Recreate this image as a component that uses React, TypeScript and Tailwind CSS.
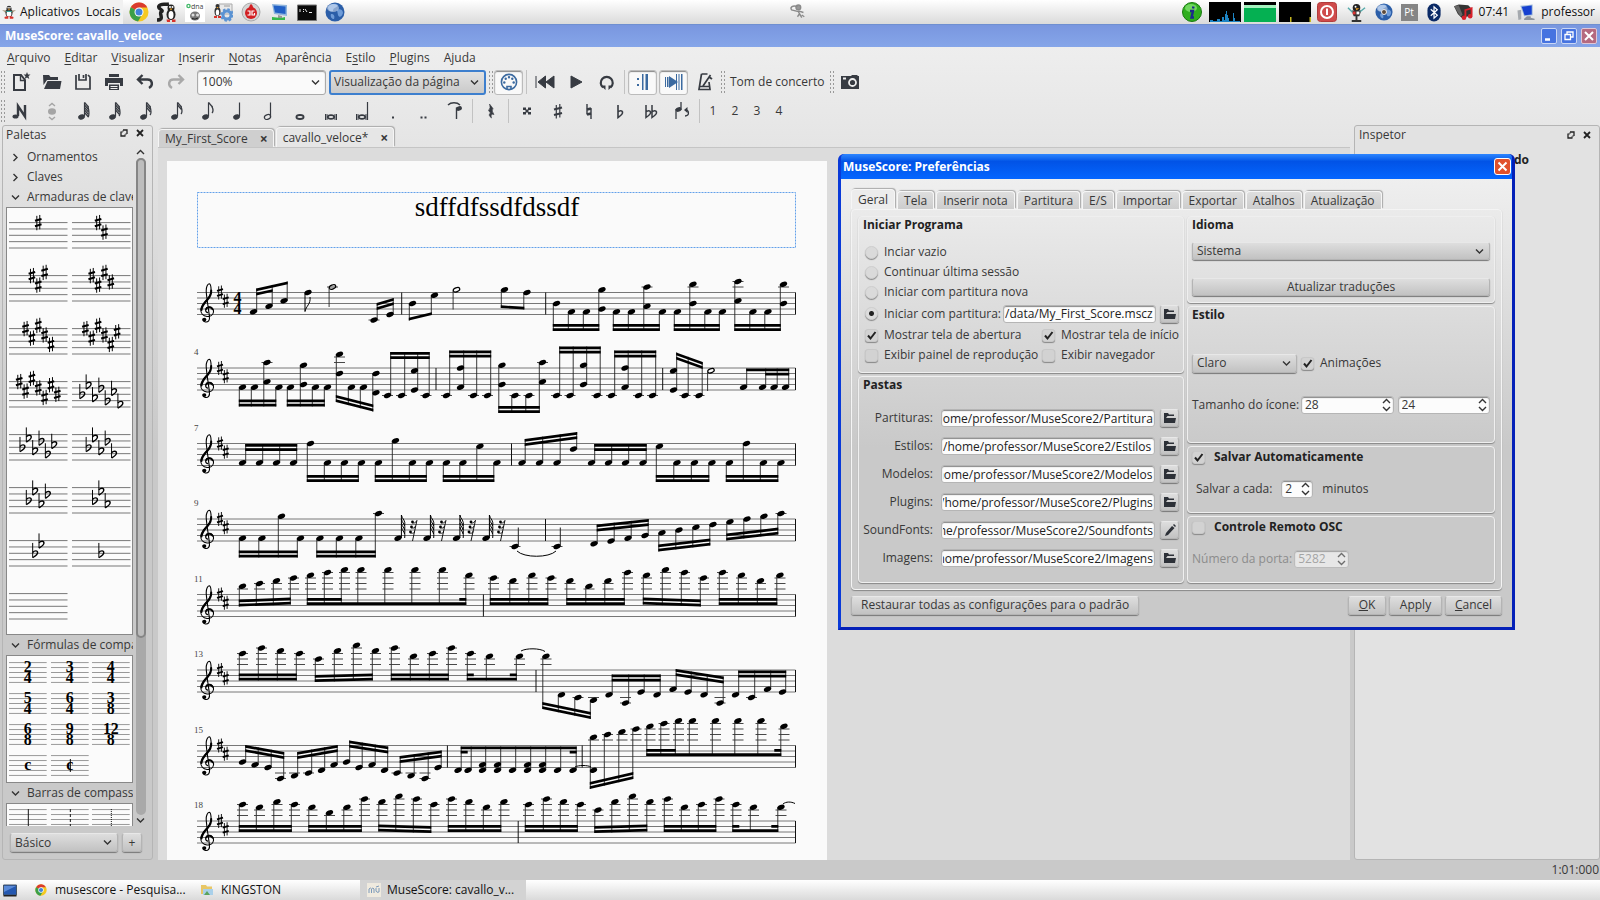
import { useEffect, useRef, type ReactNode } from "react";

const STEP = 2.75;
const SPACE = 5.5;
const STAFF_LEFT = 197;
const STAFF_RIGHT = 795.5;

type System = {
  label?: string;
  bars: number[];
  // direction, beam start, beam end, optional short beams, then x:pitch[,pitch]
  beams: string[];
};

const systems: System[] = [
  {
    bars: [401.7, 545.7],
    beams: [
      "u -4 -11 sec0-1 253.5:7 269:5 284:3",
      "u 10.5 5.5 374:10 390:8",
      "d 28 22.5 one 412.5:4 434.5:1",
      "d 15.5 17 one 504.5:-1 527:0",
      "d 38.5 38.5 556.5:4 571.5:7 586.5:7 602:-1,6",
      "d 38.5 38.5 616.5:7 631.5:7 647:-2,5 662.5:7",
      "d 38.5 38.5 677.5:7 693:-3,4 708:7 722.5:7",
      "d 38.5 38.5 738:-4,3 753:7 768:7 783.5:-3,4",
    ],
  },
  {
    label: "4",
    bars: [436, 662.7],
    beams: [
      "d 38.5 38.5 242.5:7 254.5:7 267:-2,5 279:7",
      "d 38.5 38.5 290.5:7 303.5:-1,6 315.5:7 327.5:7",
      "d 34 43.5 339.5:-5,2 351.5:7 363.5:7 376:2,9",
      "u -16 -16 387.5:10 401.5:10 414.5:1,8 426:10",
      "u -17.5 -17.5 446.5:10 460.5:0,7 473.5:10 487.5:10",
      "d 45 45 502:-1,6 515:10 529:10 542.5:-2,5",
      "u -21.5 -21.5 556.5:10 570:10 583.5:-1,6 597:10",
      "u -17.5 -17.5 611.5:10 625:0,7 638.5:10 652.5:10",
      "u -15.5 -6 673.5:1,8 685:10 699:10",
      "u 0.5 0.5 sec1-3 743.5:7 762.5:7 774:7 785.5:7",
    ],
  },
  {
    label: "7",
    bars: [511.5],
    beams: [
      "u 0.5 0.5 242.5:7 259.5:7 276.5:7 293.5:7",
      "d 38.5 38.5 310.5:0 327.5:7 344.5:7 361.5:7",
      "d 38.5 38.5 378.5:7 395.5:-1 412.5:7 429.5:7",
      "d 38.5 38.5 446.5:7 463:7 480:1 497:7",
      "u -4.5 -11.5 522:7 539.5:7 557:7 573.5:2",
      "u 0.5 0.5 591.5:7 608.5:7 625.5:7 643:7",
      "d 38.5 38.5 659.5:1 677:7 694.5:7 712:7",
      "d 38.5 38.5 729.5:7 746.5:0 763.5:7 781:7",
    ],
  },
  {
    label: "9",
    bars: [545.5],
    beams: [
      "d 38.5 38.5 242.5:7 262:7 281.5:-1 300.5:7",
      "d 38.5 38.5 320:7 339.5:7 359:7 378.5:-2",
      "u 5.5 0 594:9 611:8 628:7 645:6",
      "d 32.5 26.5 662:5 679:4 696:3 713:2",
      "d 21.5 15.5 730:1 747:0 764:-1 781:-2",
    ],
  },
  {
    label: "11",
    bars: [483.4],
    beams: [
      "d 12 10 242.5:-3 259.5:-4 276.5:-5 293.5:-6",
      "d 10.5 10.5 sec0-2 end 310.5:-7 327.5:-8 344.5:-9 361:-9 388:-9 415:-9 442.5:-9 469:-7",
      "d 10.5 10.5 493.5:-6 513:-5 532:-7 551:-6",
      "d 10.5 10.5 570:-5 589:-3 608:-5 627.5:-8",
      "d 10 12 646.5:-7 665.5:-9 684.5:-8 703.5:-6",
      "d 10.5 10.5 722.5:-8 741.5:-7 760.5:-5 780:-7",
    ],
  },
  {
    label: "13",
    bars: [536],
    beams: [
      "d 10.5 10.5 242.5:-6 261.5:-8 280.5:-7 299.5:-6",
      "d 12 10.5 318.5:-4 337.5:-7 356.5:-9 375.5:-7",
      "d 10.5 10.5 394.5:-8 413.5:-5 432.5:-6 451.5:-8",
      "d 10.5 10.5 one start end 470.5:-6 489.5:-5 519.5:-5",
      "d 39 49 546:-5 561.5:9 578:10 593.5:11",
      "u 4.5 4.5 609:9 625.5:12 641:8 657:9",
      "u -1 6.5 673:7 688:8 704:9 720:12",
      "u 0.5 0.5 735.5:9 751.5:10 767.5:7 782.5:8",
    ],
  },
  {
    label: "15",
    bars: [447.4, 582.2],
    beams: [
      "u -0.5 6.5 242.5:6 255:7 268:8 280.5:12",
      "u 6.5 -0.5 294.5:11 308.5:10 321.5:9 334:7",
      "u -5 1 346.5:6 359:8 372:7 384.5:9",
      "u 10.5 5 397:10 411:11 425:12 438:8",
      "u 1 1 one start end 458:9 468:9 482.5:7,9 497.5:7,9 512.5:9 527.5:7,9 542.5:7,9 557.5:9 573:9",
      "d 43.5 33.5 593.5:-3,9 607.5:-4 622:-5 636:-6",
      "d 10.5 10.5 sec0-2 end 650:-7 664:-8 678.5:-9 692.5:-9 715.5:-9 738:-9 761:-9 784:-7",
    ],
  },
  {
    label: "18",
    bars: [518.2],
    beams: [
      "d 11 11 242.5:-6 259.5:-5 277:-7 294.5:-6",
      "d 11 11 312:-5 329.5:-3 347:-5 364.5:-8",
      "d 10.5 12 382:-7 399:-9 416.5:-8 434:-6",
      "d 11 11 451.5:-8 469:-7 486.5:-5 504:-7",
      "d 11 11 528.5:-6 546.5:-8 563.5:-7 580.5:-6",
      "d 12 10.5 598:-4 615:-7 632.5:-9 650:-7",
      "d 11 11 667.5:-8 684.5:-5 701.5:-6 719:-8",
      "d 11 11 one start end 736:-6 753.5:-5 781:-5",
    ],
  },
];

function Head({ x, y, hollow }: { x: number; y: number; hollow?: boolean }) {
  return (
    <ellipse cx={x} cy={y} rx={hollow ? 3.4 : 3.8} ry={hollow ? 2 : 2.5} transform={`rotate(-22 ${x} ${y})`} fill={hollow ? "none" : "#000"} stroke="#000" strokeWidth={hollow ? 1.2 : 0} />
  );
}

function Ledgers({ x, top, pitch }: { x: number; top: number; pitch: number }) {
  const lines: number[] = [];
  for (let p = -2; p >= pitch; p -= 2) lines.push(p);
  for (let p = 10; p <= pitch; p += 2) lines.push(p);
  return (
    <>
      {lines.map((p) => (
        <line key={p} x1={x - 5.5} x2={x + 5.5} y1={top + p * STEP} y2={top + p * STEP} stroke="#333" strokeWidth={0.9} />
      ))}
    </>
  );
}

function BeamGroup({ data, top }: { data: string; top: number }) {
  const words = data.split(" ");
  const up = words[0] === "u";
  const from = top + Number(words[1]);
  const to = top + Number(words[2]);
  const notes = words
    .filter((w) => w.includes(":"))
    .map((w) => {
      const [x, pitches] = w.split(":");
      const px = Number(x);
      return { x: px, stem: px + (up ? 3.2 : -3.2), pitches: pitches.split(",").map(Number) };
    });
  const first = notes[0].stem;
  const last = notes[notes.length - 1].stem;
  const beamY = (x: number) => from + ((to - from) * (x - first)) / (last - first);
  const inner = up ? 4.2 : -4.2;
  const bar = (a: number, b: number, shift: number) => {
    const edge = up ? 2.7 : -2.7;
    return `M${a - 0.5} ${beamY(a) + shift}L${b + 0.5} ${beamY(b) + shift}V${beamY(b) + shift + edge}L${a - 0.5} ${beamY(a) + shift + edge}Z`;
  };
  const range = words.find((w) => w.startsWith("sec"));
  let path = bar(first, last, 0);
  if (range) {
    const [a, b] = range.slice(3).split("-").map(Number);
    path += bar(notes[a].stem, notes[b].stem, inner);
  } else if (!words.includes("one")) {
    path += bar(first, last, inner);
  }
  if (words.includes("start")) path += bar(first, first + 6, inner);
  if (words.includes("end")) path += bar(last - 6, last, inner);

  return (
    <g>
      {notes.map((n) => {
        const far = up ? Math.max(...n.pitches) : Math.min(...n.pitches);
        return (
          <g key={n.x}>
            <line x1={n.stem} x2={n.stem} y1={top + far * STEP} y2={beamY(n.stem)} stroke="#222" strokeWidth={0.9} />
            {n.pitches.map((p) => (
              <g key={p}>
                <Ledgers x={n.x} top={top} pitch={p} />
                <Head x={n.x} y={top + p * STEP} />
              </g>
            ))}
          </g>
        );
      })}
      <path d={path} />
    </g>
  );
}

function Sharp({ x, y, s = 1 }: { x: number; y: number; s?: number }) {
  return (
    <g transform={`translate(${x} ${y}) scale(${s})`} stroke="#000" fill="none">
      <path d="M-1.3 -6.2V7M1.4 -7V6.2" strokeWidth={0.9} />
      <path d="M-3 -1.6L3 -3.3M-3 3.3L3 1.6" strokeWidth={1.9} />
    </g>
  );
}

function Flat({ x, y, s = 1 }: { x: number; y: number; s?: number }) {
  return (
    <g transform={`translate(${x} ${y}) scale(${s})`} stroke="#000" fill="none">
      <path d="M-2.2 -9.5V4" strokeWidth={0.9} />
      <path d="M-2.2 -0.8C-0.5 -2.8 2.4 -2.8 2.3 -0.4C2.2 1.4 0 2.6 -2.2 4" strokeWidth={1.3} />
    </g>
  );
}

function Clef({ top }: { top: number }) {
  return (
    <g transform={`translate(200 ${top - 9.5})`} fill="none" stroke="#000" strokeLinecap="round">
      <path d="M7.6 29.6C4.8 28.8 5 24.6 8.2 23.9C11.6 23.3 14 26 13.5 29C13 32.2 10 33.8 7 33.5C3 33 .6 30 .8 26.4C1.2 21.5 5 18.5 8 15C10.5 12 11.5 9 11 5C10.8 2.5 10 .8 9.2 .8C7.6 1 6 4 6.2 8C6.5 14 8.5 26 9.4 33C10.1 37.5 8 39.3 5.5 39C3.7 38.8 2.5 37.4 3 35.8" strokeWidth={1.1} />
      <path d="M1.5 27C1.9 22.5 5 19.4 7.8 16.4C10 14 11.4 11 11.2 7.4" strokeWidth={2} />
      <path d="M6.2 26C7 24.2 10.6 23.6 12.5 26.2" strokeWidth={1.8} />
      <circle cx={4.4} cy={36.6} r={1.9} fill="#000" stroke="none" />
    </g>
  );
}

function FourthRest({ x, top }: { x: number; top: number }) {
  return (
    <g stroke="#000" fill="none">
      <path d={`M${x + 3} ${top + 1}L${x - 1.5} ${top + 22}`} strokeWidth={0.9} />
      {[3, 8, 13].map((d, i) => (
        <g key={d}>
          <circle cx={x - 1.5 - i} cy={top + d} r={1.4} fill="#000" stroke="none" />
          <path d={`M${x - 1.5 - i} ${top + d + 1}Q${x + 1} ${top + d + 2} ${x + 2.5 - i} ${top + d - 1}`} strokeWidth={0.8} />
        </g>
      ))}
    </g>
  );
}

function HalfNote({ x, pitch, top, end }: { x: number; pitch: number; top: number; end: number }) {
  return (
    <g>
      <Ledgers x={x} top={top} pitch={pitch} />
      <Head x={x} y={top + pitch * STEP} hollow />
      <line x1={x - 3.4} x2={x - 3.4} y1={top + pitch * STEP + 1} y2={top + end} stroke="#222" strokeWidth={0.9} />
    </g>
  );
}

function Score() {
  const tops = systems.map((_, i) => 292.5 + i * 75.5);
  return (
    <svg viewBox="167 161 660 699" className="block w-[660px] shrink-0" role="img" aria-label="cavallo_veloce">
      <rect x={197.5} y={192.5} width={598} height={55} fill="none" stroke="#62a0ea" strokeDasharray="2 1" />
      <text x={497} y={216} textAnchor="middle" fontFamily="Liberation Serif, serif" fontSize={27}>
        sdffdfssdfdssdf
      </text>
      {systems.map((system, i) => {
        const top = tops[i];
        return (
          <g key={top}>
            {[0, 1, 2, 3, 4].map((l) => (
              <line key={l} x1={STAFF_LEFT} x2={STAFF_RIGHT} y1={top + l * SPACE} y2={top + l * SPACE} stroke="#555" strokeWidth={0.8} />
            ))}
            {[...system.bars, STAFF_RIGHT].map((x) => (
              <line key={x} x1={x} x2={x} y1={top} y2={top + 22} stroke="#111" strokeWidth={1} />
            ))}
            {system.label && (
              <text x={194} y={top - 13} fontFamily="Liberation Serif, serif" fontSize={9} fill="#444">
                {system.label}
              </text>
            )}
            <Clef top={top} />
            <Sharp x={220} y={top} />
            <Sharp x={225.7} y={top + 3 * STEP} />
            {system.beams.map((b) => (
              <BeamGroup key={b} data={b} top={top} />
            ))}
          </g>
        );
      })}
      {[303.2, 314.2].map((y) => (
        <text key={y} x={237.5} y={y} textAnchor="middle" fontFamily="Liberation Serif, serif" fontWeight={700} fontSize={16}>
          4
        </text>
      ))}
      <Head x={308} y={292.5} />
      <path d="M305 293.5V311.5M305 311.5C306 306 311 304 310 297" fill="none" stroke="#000" />
      <HalfNote x={332.5} pitch={-2} top={tops[0]} end={14.5} />
      <HalfNote x={456.5} pitch={-1} top={tops[0]} end={17} />
      <HalfNote x={711} pitch={1} top={tops[1]} end={23} />
      {[398, 427, 456.5, 486].map((x) => (
        <g key={x}>
          <Head x={x} y={tops[3] + 7 * STEP} />
          <line x1={x + 3.4} x2={x + 3.4} y1={tops[3] + 19} y2={tops[3] - 4} stroke="#000" />
          {[-4, 0, 4, 8].map((d) => (
            <path key={d} d={`M${x + 3.4} ${tops[3] + d}q.5 2.5 2.5 5q1.500 2.500 .8 6`} fill="none" stroke="#000" strokeWidth={1} />
          ))}
          <FourthRest x={x + 16} top={tops[3]} />
        </g>
      ))}
      {[515, 557].map((x) => (
        <g key={x}>
          <Ledgers x={x} top={tops[3]} pitch={10} />
          <Head x={x} y={tops[3] + 10 * STEP} />
          <line x1={x + 3.3} x2={x + 3.3} y1={tops[3] + 27} y2={tops[3] + 8.5} stroke="#222" />
        </g>
      ))}
      <path d="M517 551C524 558 549 558 556 551M521 651C526 648 540 648 545 651.5M575 767C578 765 588 765 591 767M783 804C786 801.5 791 801.5 795 803.5" fill="none" stroke="#000" strokeWidth={1} />
    </svg>
  );
}

const sharpOrder = [0, 3, -1, 2, 5, 1, 4];
const flatOrder = [4, 1, 5, 2, 6, 3, 7];
const keySignatures = [1, 2, 3, 4, 5, 6, 7, -7, -6, -5, -4, -3, -2, -1, 0];

function KeyCell({ count }: { count: number }) {
  const n = Math.abs(count);
  const order = count > 0 ? sharpOrder : flatOrder;
  return (
    <svg viewBox="0 0 63 53" className="h-[53px] w-full">
      {[0, 1, 2, 3, 4].map((l) => (
        <rect key={l} x={2} y={13 + l * 6.4} width={59} height={1} fill="#777" />
      ))}
      {order.slice(0, n).map((p, i) => {
        const x = 31.5 + (i - (n - 1) / 2) * 6.4;
        const y = 13.5 + p * 3.2;
        return count > 0 ? <Sharp key={p} x={x} y={y} s={1.1} /> : <Flat key={p} x={x} y={y} s={1.1} />;
      })}
    </svg>
  );
}

const timeSignatures = ["2/4", "3/4", "4/4", "5/4", "6/4", "3/8", "6/8", "9/8", "12/8", "C", "C|"];

function TimeCell({ value }: { value: string }) {
  const [upper, lower] = value.split("/");
  return (
    <svg viewBox="0 0 42 31" className="h-[31px] w-full">
      {[0, 1, 2, 3, 4].map((l) => (
        <rect key={l} x={2} y={5 + l * 5} width={38} height={1} fill="#999" />
      ))}
      <g fontFamily="Liberation Serif, serif" fontWeight={700} fontSize={16} textAnchor="middle">
        {lower ? (
          <>
            <text x={21} y={15}>{upper}</text>
            <text x={21} y={26}>{lower}</text>
          </>
        ) : (
          <text x={21} y={20}>c</text>
        )}
      </g>
      {value === "C|" && <path d="M21.5 9V22" stroke="#000" />}
    </svg>
  );
}

function BarCell({ dash }: { dash?: string }) {
  return (
    <svg viewBox="0 0 42 31" className="h-[31px] w-full">
      {[0, 1, 2, 3, 4].map((l) => (
        <rect key={l} x={2} y={5 + l * 5} width={38} height={1} fill="#999" />
      ))}
      <path d="M21.5 5V26" stroke="#111" strokeDasharray={dash} />
    </svg>
  );
}

function Chevron({ dir = "down" }: { dir?: "down" | "up" | "right" }) {
  const d = { down: "M2 3.5L5.5 7L9 3.5", up: "M2 7L5.5 3.5L9 7", right: "M3.5 2L7 5.5L3.5 9" }[dir];
  return (
    <svg viewBox="0 0 11 11" className="h-[11px] w-[11px] shrink-0" fill="none" stroke="#333" strokeWidth={1.4}>
      <path d={d} />
    </svg>
  );
}

function DockButtons() {
  return (
    <div className="flex gap-2">
      <button aria-label="Desencaixar">
        <svg viewBox="0 0 8 8" className="h-2 w-2" fill="none" stroke="#222" strokeWidth={1.3}>
          <path d="M3 1H7V5M1 2.5V7H5.5" />
          <path d="M5 7V5H7M1 3H3V1" strokeWidth={0.7} />
        </svg>
      </button>
      <button aria-label="Fechar painel">
        <svg viewBox="0 0 8 8" className="h-2 w-2" stroke="#222" strokeWidth={1.8}>
          <path d="M1 1L7 7M7 1L1 7" />
        </svg>
      </button>
    </div>
  );
}

function PaletteTitle({ children, open }: { children: string; open?: boolean }) {
  return (
    <button className="flex h-5 w-full items-center gap-[6px] overflow-hidden pl-1 text-left whitespace-nowrap">
      <Chevron dir={open ? "down" : "right"} />
      {children}
    </button>
  );
}

function Select({ label, value, className, inset = "pl-1" }: { label: string; value: string; className: string; inset?: string }) {
  return (
    <div className={`relative flex items-center rounded-[3px] ${className}`}>
      <select aria-label={label} className={`h-full w-full appearance-none bg-transparent outline-none ${inset}`}>
        <option>{value}</option>
      </select>
      <span className="pointer-events-none absolute right-1">
        <Chevron />
      </span>
    </div>
  );
}

const raised = "border border-[#b4b4b4] border-t-[#e8e8e8] bg-linear-to-b from-[#dedede] to-[#c2c2c2] shadow-[0_1px_1px_#777]";

function Palettes() {
  return (
    <aside className="flex w-[151px] shrink-0 flex-col rounded-[3px] border border-[#b5b5b5] pl-[3px]">
      <div className="flex h-[21px] shrink-0 items-center justify-between pr-2 pb-2">
        <h2 className="pt-1">Paletas</h2>
        <DockButtons />
      </div>
      <div className="flex min-h-0 flex-1 gap-[2px]">
        <div className="w-[127px] overflow-hidden">
          <PaletteTitle>Ornamentos</PaletteTitle>
          <PaletteTitle>Claves</PaletteTitle>
          <PaletteTitle open>Armaduras de clave</PaletteTitle>
          <div className="grid grid-cols-2 border border-[#888] bg-[#fbfbfb] py-px">
            {keySignatures.map((k) => (
              <KeyCell key={k} count={k} />
            ))}
          </div>
          <PaletteTitle open>Fórmulas de compasso</PaletteTitle>
          <div className="grid grid-cols-3 border border-[#888] bg-[#fbfbfb] py-px">
            {timeSignatures.map((t) => (
              <TimeCell key={t} value={t} />
            ))}
          </div>
          <PaletteTitle open>Barras de compasso</PaletteTitle>
          <div className="grid grid-cols-3 border border-[#888] bg-[#fbfbfb]">
            <BarCell />
            <BarCell dash="3 2" />
            <BarCell dash="1 1" />
          </div>
        </div>
        <div className="flex w-[11px] flex-col items-center">
          <Chevron dir="up" />
          <div className="w-[10px] flex-1 rounded-full bg-[#a9a9a9]">
            <div className="h-[73%] rounded-full border-2 border-[#858585] bg-[#bdbdbd]" />
          </div>
          <Chevron />
        </div>
      </div>
      <div className="flex h-[33px] shrink-0 items-center gap-1 pl-1">
        <Select label="Conjunto de paletas" value="Básico" className={`h-[19px] w-[108px] ${raised}`} />
        <button className={`h-[19px] w-5 rounded-[3px] leading-none ${raised}`}>+</button>
      </div>
    </aside>
  );
}

function Dark({ children }: { children: ReactNode }) {
  return (
    <svg viewBox="0 0 20 20" className="h-5 w-5" fill="none" stroke="#373b42" strokeWidth={2}>
      {children}
    </svg>
  );
}

function ToolButton({ label, children, on }: { label: string; children: ReactNode; on?: boolean }) {
  return (
    <button aria-label={label} className={`flex h-[25px] items-center justify-center ${on ? "mx-[1px] w-[29px] rounded-[3px] border border-[#bbb] bg-[#f9f9f9] shadow-[inset_0_1px_1px_#888]" : "w-[31px]"}`}>
      <Dark>{children}</Dark>
    </button>
  );
}

function Handle() {
  return <span className="h-6 w-[5px] shrink-0 bg-[radial-gradient(#999_1px,transparent_1px)] bg-size-[3px_4px]" />;
}

function Divider() {
  return <span className="mx-[2px] h-6 w-px bg-[#c2c2c2]" />;
}

function NoteIcon({ flags = 0, hollow }: { flags?: number; hollow?: boolean }) {
  return (
    <>
      <ellipse cx={8.5} cy={16} rx={3.2} ry={2.3} transform="rotate(-20 8.5 16)" fill={hollow ? "none" : "#373b42"} strokeWidth={hollow ? 1.2 : 0.5} />
      <path d="M11.5 15.5V1.5" strokeWidth={1.2} />
      {Array.from({ length: flags }, (_, i) => (
        <path key={i} d={`M11.500 ${1.5 + i * 2.5}L15.500 ${6 + i * 2.5}`} strokeWidth={1.3} />
      ))}
      {flags > 0 && <path d={`M15 5.500Q17 ${9 + flags} 15 ${11 + flags}`} strokeWidth={1.3} />}
    </>
  );
}

function BreveIcon({ stem }: { stem?: boolean }) {
  return (
    <>
      <ellipse cx={10} cy={16} rx={3.2} ry={1.9} strokeWidth={1.7} />
      <path d="M4.5 13V19M6 13V19M14 13V19M15.5 13V19" strokeWidth={1} />
      {stem && <path d="M15.5 19V1" strokeWidth={1.2} />}
    </>
  );
}

// text before the mnemonic, the mnemonic, text after it
const menus = [
  ["", "A", "rquivo"],
  ["", "E", "ditar"],
  ["", "V", "isualizar"],
  ["", "I", "nserir"],
  ["", "N", "otas"],
  ["Aparência", "", ""],
  ["E", "s", "tilo"],
  ["", "P", "lugins"],
  ["Ajuda", "", ""],
];

function Toolbars() {
  return (
    <>
      <nav className="flex h-[21px] shrink-0 items-center gap-[14px] pl-[7px]">
        {menus.map(([before, key, after]) => (
          <button key={before + key + after}>
            {before}
            <span className="underline underline-offset-2">{key}</span>
            {after}
          </button>
        ))}
      </nav>
      <div className="flex h-7 shrink-0 items-center">
        <Handle />
        <ToolButton label="Novo">
          <path d="M3 3H10L14 8V18H3Z" />
          <path d="M9.5 3V8.5H14" strokeWidth={1.4} />
          <path d="M16 0L17 2.5L19.5 2.5L17.5 4.2L18.3 7L16 5.5L13.7 7L14.5 4.2L12.5 2.5L15 2.5Z" fill="#373b42" stroke="none" />
        </ToolButton>
        <ToolButton label="Abrir">
          <path d="M1 3H7L8.5 5H16V8H5L1.5 13Z" fill="#373b42" stroke="none" />
          <path d="M5.5 9H19.5L18 17H2Z" fill="#373b42" stroke="none" />
        </ToolButton>
        <ToolButton label="Salvar">
          <path d="M3 3V17H17V5L15 3M6 2V8H13V2M10.5 3V6" strokeWidth={1.7} />
        </ToolButton>
        <ToolButton label="Imprimir">
          <path d="M5 2H15V5H5ZM1 6H19V14H16V11H4V14H1ZM5 12.5H15V18H5Z" fill="#373b42" stroke="none" />
          <path d="M6.5 14.5H13.5M6.5 16.5H13.5" stroke="#eee" strokeWidth={1} />
        </ToolButton>
        <ToolButton label="Desfazer">
          <path d="M7.5 3L3 7.500L7.500 12M3.500 7.500H12.500C17.500 7.500 18.500 13.500 14 16" strokeWidth={2.4} />
        </ToolButton>
        <ToolButton label="Refazer">
          <path d="M12.500 3L17 7.500L12.500 12M16.500 7.500H7.500C2.500 7.500 1.500 13.500 6 16" stroke="#a9a9a9" strokeWidth={2.4} />
        </ToolButton>
        <span className="w-1" />
        <Select label="Zoom" value="100%" className="ml-[2px] h-[25px] w-[129px] border border-[#aaa] bg-[#fafafa] shadow-[inset_0_1px_1px_#999]" />
        <Select label="Modo de visualização" value="Visualização da página" inset="pl-[3px]" className="mr-[2px] ml-[3px] h-[25px] w-[157px] border-2 border-[#3d7fce] bg-linear-to-b from-[#e2e2e2] to-[#cacaca]" />
        <Handle />
        <ToolButton label="Entrada MIDI" on>
          <g stroke="#3b6aa0">
            <circle cx={10} cy={10} r={7.6} strokeWidth={1.6} />
            <path d="M8 17V14.5H12V17" strokeWidth={1.6} />
            <g fill="#3b6aa0" stroke="none">
              <circle cx={5.3} cy={10.5} r={1.2} />
              <circle cx={6.7} cy={6.8} r={1.2} />
              <circle cx={10} cy={5.2} r={1.2} />
              <circle cx={13.3} cy={6.8} r={1.2} />
              <circle cx={14.7} cy={10.5} r={1.2} />
            </g>
          </g>
        </ToolButton>
        <Divider />
        <ToolButton label="Voltar ao início">
          <path d="M1 4V16M10.5 4V16L3 10ZM19 4V16L11 10Z" fill="#373b42" strokeWidth={1} />
        </ToolButton>
        <ToolButton label="Tocar">
          <path d="M5 4L16 10L5 16Z" fill="#373b42" strokeWidth={1} />
        </ToolButton>
        <ToolButton label="Repetição contínua">
          <path d="M6 15.5A6 6 0 1 1 13.5 15.5" strokeWidth={2.2} />
          <path d="M4 13.5H8.5V18ZM16 13.5H11.5V18Z" fill="#373b42" stroke="none" />
        </ToolButton>
        <Divider />
        <ToolButton label="Tocar repetições" on>
          <g fill="#3b6aa0" stroke="none">
            <path d="M4 6h2v2h-2zM4 12h2v2h-2zM9 2h1.5v16h-1.5zM12.5 2h2.5v16h-2.5z" />
          </g>
        </ToolButton>
        <ToolButton label="Acompanhar partitura" on>
          <g fill="#3b6aa0" stroke="none">
            <path d="M1 5h1v10h-1zM3 5h1.5v10h-1.5zM5 4L14 10L5 16zM12 2h1v16h-1zM14.5 2h1v16h-1zM17 2h1.5v16h-1.5z" />
          </g>
        </ToolButton>
        <ToolButton label="Metrônomo">
          <path d="M6.5 2H12.5M6.5 2L4 17.5H15L14 10M8 14L15.5 3M5 14.5H14" strokeWidth={1.7} />
          <path d="M14 5L17 7" />
        </ToolButton>
        <Handle />
        <button className="px-[5px]">Tom de concerto</button>
        <Handle />
        <ToolButton label="Captura de imagem">
          <path d="M1 4H11L12 3H17L18 4H19V17H1Z" fill="#373b42" stroke="none" />
          <circle cx={12.5} cy={10.5} r={3.5} stroke="#eee" strokeWidth={1.8} />
          <path d="M3 6.5H6" stroke="#eee" />
        </ToolButton>
      </div>
      <div className="flex h-[29px] shrink-0 items-center">
        <Handle />
        <ToolButton label="Entrada de notas">
          <path d="M7 15V5L14 15.5V4" strokeWidth={2.4} />
          <ellipse cx={4.5} cy={15.5} rx={3} ry={2} fill="#373b42" stroke="none" />
        </ToolButton>
        <ToolButton label="Subir ou descer">
          <g stroke="#a5a5a5">
            <path d="M7 5L10 2.5L13 5M7 16L10 18.5L13 16" strokeWidth={1.4} />
            <ellipse cx={10} cy={10.5} rx={3} ry={2.3} fill="#a5a5a5" />
          </g>
        </ToolButton>
        <ToolButton label="Semifusa"><NoteIcon flags={5} /></ToolButton>
        <ToolButton label="Fusa"><NoteIcon flags={4} /></ToolButton>
        <ToolButton label="Trinta e dois avos"><NoteIcon flags={3} /></ToolButton>
        <ToolButton label="Semicolcheia"><NoteIcon flags={2} /></ToolButton>
        <ToolButton label="Colcheia"><NoteIcon flags={1} /></ToolButton>
        <ToolButton label="Semínima"><NoteIcon /></ToolButton>
        <ToolButton label="Mínima"><NoteIcon hollow /></ToolButton>
        <ToolButton label="Semibreve"><ellipse cx={10} cy={16} rx={3.6} ry={2} strokeWidth={1.8} /></ToolButton>
        <ToolButton label="Breve"><BreveIcon /></ToolButton>
        <ToolButton label="Longa"><BreveIcon stem /></ToolButton>
        <ToolButton label="Ponto"><path d="M9 15.5h2v2h-2z" fill="#373b42" stroke="none" /></ToolButton>
        <ToolButton label="Ponto duplo"><path d="M6.5 15.5h2v2h-2zM10.5 15.5h2v2h-2z" fill="#373b42" stroke="none" /></ToolButton>
        <ToolButton label="Ligadura">
          <path d="M3 4C6 1 12 1 15 4" strokeWidth={1.4} />
          <path d="M11.5 18V6.5" strokeWidth={1.4} />
          <ellipse cx={14} cy={7.5} rx={3} ry={2.2} transform="rotate(-20 14 7.5)" fill="#373b42" stroke="none" />
        </ToolButton>
        <Divider />
        <ToolButton label="Pausa">
          <path d="M8.5 3L12 7.5Q10 9.5 13 13.5Q9 12 10.5 17Q6.5 14 9.5 12L7.5 9.5Q10 7 8.5 3Z" fill="#373b42" strokeWidth={0.6} />
        </ToolButton>
        <Divider />
        <ToolButton label="Dobrado sustenido">
          <path d="M7.5 7.5L12.5 12.5M12.5 7.5L7.5 12.5" strokeWidth={1.5} />
          <path d="M6 6.5h3v2.5h-3zM11 6.5h3v2.5h-3zM6 11h3v2.5h-3zM11 11h3v2.5h-3z" fill="#373b42" stroke="none" />
        </ToolButton>
        <ToolButton label="Sustenido">
          <path d="M8.3 4V17.5M11.8 3V16.5" strokeWidth={1.2} />
          <path d="M6 8.5L14 6.5M6 14L14 12" strokeWidth={2.2} />
        </ToolButton>
        <ToolButton label="Bequadro">
          <path d="M8 3V13.5M12 7V18" strokeWidth={1.4} />
          <path d="M8 8.5L12 7.5M8 13.5L12 12.5" strokeWidth={2.4} />
        </ToolButton>
        <ToolButton label="Bemol">
          <path d="M8 4V16.5C11 14.5 13 13 12.5 11C12 9 9.5 9.5 8 11" strokeWidth={1.6} />
        </ToolButton>
        <ToolButton label="Dobrado bemol">
          <path d="M5 4V16.5C8 14.5 10 13 9.5 11C9 9 6.5 9.5 5 11M11 4V16.5C14 14.5 16 13 15.5 11C15 9 12.5 9.5 11 11" strokeWidth={1.5} />
        </ToolButton>
        <ToolButton label="Inverter direção">
          <path d="M4 18V8M9 9V1M13 15C18 15 17 9 13.5 9" strokeWidth={1.3} />
          <path d="M15.5 6L12 9L15.5 12Z" fill="#373b42" stroke="none" />
          <ellipse cx={6.5} cy={8.5} rx={3} ry={2.2} transform="rotate(-20 6.5 8.5)" fill="#373b42" stroke="none" />
        </ToolButton>
        <Divider />
        {[1, 2, 3, 4].map((voice) => (
          <button key={voice} className="w-[22px]">{voice}</button>
        ))}
      </div>
    </>
  );
}

function ChromeIcon({ className }: { className: string }) {
  return (
    <svg viewBox="0 0 20 20" className={className}>
      <circle cx={10} cy={10} r={9.5} fill="#f5c921" />
      <path d="M10 10L1.8 5.3A9.5 9.5 0 0 1 18.3 5.5H10Z" fill="#db3b2f" />
      <path d="M10 10L1.8 5.3A9.5 9.5 0 0 0 9 19.5L13.5 12Z" fill="#3c9f4a" />
      <circle cx={10} cy={10} r={4.5} fill="#fff" />
      <circle cx={10} cy={10} r={3.5} fill="#4183d9" />
    </svg>
  );
}

function Penguin({ className }: { className: string }) {
  return (
    <svg viewBox="0 0 20 20" className={className}>
      <path d="M0 7L7 8L7 13ZM20 7L13 8V13Z" fill="#b5a58a" />
      <ellipse cx={10} cy={11} rx={5} ry={6} fill="#333" />
      <ellipse cx={10} cy={12.5} rx={3.4} ry={4.2} fill="#fff" />
      <circle cx={10} cy={4.5} r={3.5} fill="#333" />
      <circle cx={8.7} cy={4} r={1.1} fill="#fff" />
      <circle cx={11.4} cy={4} r={1.1} fill="#fff" />
      <path d="M8.5 5.5H11.5L10 7.5Z" fill="#f0a020" />
      <path d="M6 8.5H14V10H6Z" fill="#3aa79a" />
      <path d="M3.5 17L9 15.5V19.5H4ZM16.5 17L11 15.5V19.5H16Z" fill="#d8322a" />
    </svg>
  );
}

function ComputerIcon({ className }: { className: string }) {
  return (
    <svg viewBox="0 0 20 20" className={className}>
      <path d="M1 8L5 7V17L2 18Z" fill="#a5a9ae" />
      <path d="M4 3L17 1.5V13L8 14Z" fill="#9db8d8" />
      <path d="M5.500 4L16 2.500V12L8.500 13Z" fill="#1540d0" />
      <path d="M11 14H15V15.500L19 16.500V18H8V16.500Z" fill="#8d949c" />
    </svg>
  );
}

function Globe({ className }: { className: string }) {
  return (
    <svg viewBox="0 0 20 20" className={className}>
      <circle cx={10} cy={10} r={9.5} fill="#2b5ea8" />
      <path d="M3 5C6 1 11 1 13 3C12 6 8 5 8 9C5 10 3 8 3 5ZM12 8C15 6 18 8 18 11C17 15 14 16 13 13ZM6 12C9 12 10 14 9 17C7 17 5 15 6 12Z" fill="#6f9cd8" />
      <ellipse cx={8} cy={6} rx={6} ry={4} fill="#fff" opacity={0.45} />
    </svg>
  );
}

function TopPanel() {
  return (
    <header className="flex h-6 shrink-0 items-center bg-linear-to-b from-white to-[#dadada] text-[#111]">
      <button className="flex h-6 items-center gap-1 bg-[#f1f1f1] px-[2px]">
        <Penguin className="h-[14px] w-[14px]" />
        Aplicativos&nbsp;&nbsp;Locais
      </button>
      <div className="ml-[6px] flex items-center gap-2">
        <ChromeIcon className="h-5 w-5" />
        <svg viewBox="0 0 22 20" className="h-5 w-5 scale-110">
          <path d="M1 18C9 18 3 12 5 10C9 8 1 7 3 4C5 1 9 3 13 2" fill="none" stroke="#222" strokeWidth={3.5} />
          <circle cx={15} cy={6} r={3.5} fill="#222" />
          <ellipse cx={15} cy={12.5} rx={4.5} ry={5.5} fill="#222" />
          <ellipse cx={15} cy={13} rx={2.5} ry={4} fill="#fff" />
          <circle cx={14} cy={5} r={1} fill="#fff" />
          <circle cx={16.5} cy={5} r={1} fill="#fff" />
          <path d="M10.5 17.5H14V20H11ZM16 17.5H19.5V20H16Z" fill="#d8322a" />
          <path d="M13.5 6.5H16.5L15 8.5Z" fill="#f0a020" />
        </svg>
        <svg viewBox="0 0 20 20" className="h-5 w-5">
          <path d="M0 0H20V20H0Z" fill="#fff" />
          <circle cx={3.5} cy={4} r={1.6} fill="none" stroke="#45b96b" strokeWidth={1.4} />
          <text x={6} y={7} fontSize={7} fontFamily="Open Sans, sans-serif" fill="#444">dna</text>
          <ellipse cx={10} cy={14} rx={5} ry={4.5} fill="#777" />
          <circle cx={8} cy={13} r={1.5} fill="#ddd" />
          <circle cx={12.5} cy={13} r={1.5} fill="#ddd" />
          <path d="M7 16.5Q10 18 13 16" stroke="#222" fill="none" />
        </svg>
        <svg viewBox="0 0 20 20" className="h-5 w-5">
          <path d="M6 2H19V12H6Z" fill="#e9e9e9" stroke="#aaa" />
          <path d="M11 4H17" stroke="#999" />
          <circle cx={14} cy={13} r={4} fill="none" stroke="#5b93d3" strokeWidth={3} />
          <circle cx={14} cy={13} r={5.8} fill="none" stroke="#5b93d3" strokeWidth={2} strokeDasharray="2.5 2" />
          <circle cx={4.5} cy={4} r={2} fill="#333" />
          <ellipse cx={4.5} cy={9.5} rx={3} ry={4.5} fill="#333" />
          <ellipse cx={4.5} cy={10.5} rx={1.7} ry={3} fill="#fff" />
          <path d="M1 14H4V16H1ZM5 14H8V16H5Z" fill="#d8322a" />
          <path d="M3.5 5H5.5L4.5 6.5Z" fill="#f0a020" />
        </svg>
        <svg viewBox="0 0 20 20" className="h-5 w-5">
          <circle cx={10} cy={10} r={9} fill="#d5d5d5" stroke="#aaa" />
          <circle cx={10} cy={11} r={6} fill="#d21f22" />
          <path d="M10 2C13 4 11 6 14 7L10 9L6 8C9 7 7 5 10 2Z" fill="#d21f22" />
          <path d="M6.5 9H9V13H6.5M13.5 9H11V13H13.5V11" fill="none" stroke="#fff" strokeWidth={1.2} />
        </svg>
        <svg viewBox="0 0 20 20" className="h-5 w-5">
          <path d="M3 2L18 3V14L5 12Z" fill="#8fb4dc" />
          <path d="M4.5 3.5L16.5 4.5V12L6 10.5Z" fill="#2160c6" />
          <path d="M9 13L13 14V16H9Z" fill="#999" />
          <path d="M3 15L12 16L16 15V18H3Z" fill="#35b84b" />
        </svg>
        <svg viewBox="0 0 20 20" className="h-5 w-5">
          <path d="M.5 3H19.5V18.5H.5Z" fill="#0a0a0a" stroke="#777" />
          <path d="M3 7V10M6 7.5h1M6 9.5h1M8 7L10 10M12 10.5H15" stroke="#eee" strokeWidth={1} />
        </svg>
        <Globe className="h-5 w-5" />
      </div>
      <svg viewBox="0 0 20 20" className="ml-[444px] h-[17px] w-[17px]" fill="none" stroke="#8a8a8a" strokeWidth={1.6}>
        <circle cx={11} cy={4} r={2.8} fill="#999" />
        <path d="M10 3C4 1 1 4 3 7L11 9L15 16M11 8L17 10M12 12L10 15M15 13L18 15" />
      </svg>
      <div className="ml-auto flex items-center">
        <svg viewBox="0 0 20 20" className="mr-[7px] h-5 w-5">
          <circle cx={10} cy={10} r={9.5} fill="#2fae1e" stroke="#187a0e" />
          <ellipse cx={9} cy={6} rx={6} ry={4} fill="#8be87a" opacity={0.7} />
          <path d="M11.5 4.5L11 6.5M8 9H11L9.5 15.5H12" stroke="#1c2a8c" strokeWidth={2.4} fill="none" />
        </svg>
        <svg viewBox="0 0 102 20" className="mr-[6px] h-5 w-[102px]">
          <path d="M0 0H32V20H0ZM35 0H67V20H35ZM70 0H102V20H70Z" fill="#000" />
          <path d="M1 20V18H4V19H8V17H11V19H13V15H15V18H16V12H17V9H18V13H19V16H20V19H24V11H25V16H26V19H31V20Z" fill="#1d84c4" />
          <path d="M35 3H67V6H35Z" fill="#a6f2bf" />
          <path d="M35 6H67V20H35Z" fill="#05b052" />
          <path d="M81 15h1.5v5h-1.5zM100.5 15h1.5v5h-1.5z" fill="#c8b820" />
        </svg>
        <svg viewBox="0 0 20 20" className="mr-[10px] h-5 w-5">
          <rect x={0.5} y={0.5} width={19} height={19} rx={3} fill="#cf4a4a" stroke="#b23c3c" />
          <circle cx={10} cy={10} r={6} fill="none" stroke="#fff" strokeWidth={2} />
          <path d="M10 6.5V13" stroke="#fff" strokeWidth={2} />
        </svg>
        <svg viewBox="0 0 20 20" className="mr-[9px] h-[19px] w-[19px]">
          <circle cx={10} cy={5} r={4} fill="#222" />
          <path d="M5 8H15L13 14H7ZM9 14H11V18H9ZM5 18H15V20H5Z" fill="#333" />
          <path d="M1 5L6 10M19 5L14 9" stroke="#5aa" strokeWidth={1.5} />
          <circle cx={9} cy={4} r={1} fill="#fff" />
          <path d="M6 9H9V12H6Z" fill="#d33" />
          <path d="M10 9H13V12H10Z" fill="#fff" />
          <path d="M9 5.5H13L10 7.5Z" fill="#f0a020" />
        </svg>
        <span className="relative mr-[8px]">
          <Globe className="h-[18px] w-[18px]" />
          <span className="absolute top-[6px] left-[6px] h-[6px] w-[6px] rounded-full border border-[#eee] bg-[#5b4a3a]" />
        </span>
        <span className="mr-[9px] flex h-[17px] w-[17px] items-center justify-center bg-[#858585] text-[10px] text-white">Pt</span>
        <svg viewBox="0 0 16 20" className="mr-[12px] h-[19px] w-[15px]">
          <rect x={0.5} y={0.5} width={14} height={19} rx={7} fill="#0b2a66" />
          <path d="M4 6.5L11 13L7.5 16V4L11 7L4 13.5" fill="none" stroke="#fff" strokeWidth={1.3} />
        </svg>
        <svg viewBox="0 0 20 18" className="mr-[6px] h-[18px] w-[19px]">
          <path d="M0 3L5 1L15 2L18 5V13L8 15L4 11Z" fill="#333" />
          <path d="M0 3L5 2L9 12L7 14Z" fill="#666" />
          <path d="M12 15V7L18.5 5V13" fill="none" stroke="#d8202a" strokeWidth={2} />
          <circle cx={10.5} cy={15} r={2.4} fill="#d8202a" />
          <circle cx={17} cy={13.5} r={2.4} fill="#d8202a" />
        </svg>
        <span className="mr-[7px]">07:41</span>
        <ComputerIcon className="mr-[5px] h-[19px] w-5" />
        <span className="mr-[5px]">professor</span>
      </div>
    </header>
  );
}

function TitleBar() {
  return (
    <div className="flex h-[23px] shrink-0 items-center gap-1 border-t border-[#6f8fd0] bg-linear-to-b from-[#7996df] to-[#86a6e9] pr-[3px] pl-[5px]">
      <h1 className="mr-auto font-bold text-white">MuseScore: cavallo_veloce</h1>
      <button aria-label="Minimizar" className="h-4 w-4 rounded-[2px] border border-[#c9d6f5] bg-[#4673e0]">
        <svg viewBox="0 0 14 14"><path d="M3 10.5H8" stroke="#fff" strokeWidth={2.5} /></svg>
      </button>
      <button aria-label="Restaurar" className="h-4 w-4 rounded-[2px] border border-[#c9d6f5] bg-[#4673e0]">
        <svg viewBox="0 0 14 14" fill="none" stroke="#fff" strokeWidth={1.3}><path d="M5 5V3H11V8H9M3 5.5H8.5V10.5H3Z" /></svg>
      </button>
      <button aria-label="Fechar" className="h-4 w-4 rounded-[2px] border border-[#e0c6d5] bg-[#b56a80]">
        <svg viewBox="0 0 14 14" stroke="#fff" strokeWidth={2}><path d="M3 3L11 11M11 3L3 11" /></svg>
      </button>
    </div>
  );
}

const group = "min-w-0 rounded-[4px] border border-[#efefef] px-1 shadow-[0_1px_1px_#888]";
const groupTitle = "pb-[2px] font-bold text-[#222]";
const field = "rounded-[3px] border border-[#b5b5b5] bg-[#fcfcfc] shadow-[inset_0_1px_1px_#888]";

function Radio({ label, checked }: { label: string; checked?: boolean }) {
  return (
    <label className="flex h-5 items-center gap-[6px] whitespace-nowrap">
      <input type="radio" name="start" defaultChecked={checked} className="h-[13px] w-[13px] appearance-none rounded-full border border-[#cfcfcf] bg-[#dadada] shadow-[0_1px_1px_#888] checked:bg-[radial-gradient(circle,#222_2px,#dcdcdc_3px)]" />
      {label}
    </label>
  );
}

function Check({ label, checked, bold }: { label: string; checked?: boolean; bold?: boolean }) {
  return (
    <label className={`flex h-5 items-center whitespace-nowrap ${bold ? "gap-[9px] font-bold text-[#222]" : "gap-[6px]"}`}>
      <span className="relative flex">
        <input type="checkbox" defaultChecked={checked} className="h-[13px] w-[13px] appearance-none rounded-[3px] border border-[#c8c8c8] bg-[#d2d2d2] shadow-[0_1px_1px_#888]" />
        {checked && (
          <svg viewBox="0 0 13 13" className="pointer-events-none absolute h-[13px] w-[13px]" fill="none" stroke="#222" strokeWidth={2}>
            <path d="M3 6.5L5.5 9.5L10.5 3" />
          </svg>
        )}
      </span>
      {label}
    </label>
  );
}

function PathInput({ id, label, value, className }: { id?: string; label?: string; value: string; className: string }) {
  const ref = useRef<HTMLInputElement>(null);
  // long paths show their end
  useEffect(() => {
    if (ref.current) ref.current.scrollLeft = ref.current.scrollWidth;
  }, []);
  return <input ref={ref} id={id} aria-label={label} defaultValue={value} className={`h-[18px] px-px text-[#222] ${field} ${className}`} />;
}

function BrowseButton({ label, edit }: { label: string; edit?: boolean }) {
  return (
    <button aria-label={label} className={`flex h-[18px] w-[19px] shrink-0 items-center justify-center rounded-[3px] ${raised}`}>
      <svg viewBox="0 0 14 12" className="h-3 w-[14px]" fill="#2d3138">
        {edit ? <path d="M2 12L3 9L9 2L11.5 4L5 11ZM10 1L11 0L13 2L12 3Z" /> : <path d="M1 1H5L6 2.5H11V4H4.5L3 6H13L12 11H1Z" />}
      </svg>
    </button>
  );
}

function Spin({ id, label, value, className, disabled }: { id?: string; label?: string; value: string; className: string; disabled?: boolean }) {
  return (
    <span className={`flex h-[18px] items-center pr-[2px] ${field} ${className} ${disabled ? "opacity-60" : ""}`}>
      <input id={id} aria-label={label} defaultValue={value} disabled={disabled} className="w-full min-w-0 bg-transparent pl-[3px] outline-none" />
      <svg viewBox="0 0 9 14" className="h-[14px] w-[9px] shrink-0" fill="none" stroke="#333" strokeWidth={1.4}>
        <path d="M1 5L4.5 1.5L8 5M1 9L4.5 12.5L8 9" />
      </svg>
    </span>
  );
}

const tabs = ["Geral", "Tela", "Inserir nota", "Partitura", "E/S", "Importar", "Exportar", "Atalhos", "Atualização"];

const folders = [
  ["Partituras", "/home/professor/MuseScore2/Partitura"],
  ["Estilos", "/home/professor/MuseScore2/Estilos"],
  ["Modelos", "/home/professor/MuseScore2/Modelos"],
  ["Plugins", "/home/professor/MuseScore2/Plugins"],
  ["SoundFonts", "/home/professor/MuseScore2/Soundfonts"],
  ["Imagens", "/home/professor/MuseScore2/Imagens"],
];

function Preferences() {
  return (
    <div role="dialog" aria-labelledby="prefs-title" className="absolute top-[154px] left-[838px] flex w-[677px] flex-col rounded-t-[6px] border-[3px] border-t-0 border-[#0a3ad8] border-r-[#0420b8] border-b-[#0420b8] bg-[#0a3ad8]">
      <div className="flex h-[25px] items-center justify-between rounded-t-[4px] bg-linear-to-b from-[#2d86ff] via-[#0253e6] via-30% to-[#0566ff] pr-px pl-[2px]">
        <h2 id="prefs-title" className="font-bold text-white">MuseScore: Preferências</h2>
        <button aria-label="Fechar preferências" className="h-[17px] w-[17px] rounded-[3px] border border-white bg-[#e1512c]">
          <svg viewBox="0 0 15 15" stroke="#fff" strokeWidth={2}><path d="M3.5 3.5L11.5 11.5M11.5 3.5L3.5 11.5" /></svg>
        </button>
      </div>
      <div className="bg-linear-to-b from-[#efefef] to-[#c9c9c9] to-60% px-[10px] pt-[10px] pb-3">
        <div className="flex h-5 items-end gap-[2px]" role="tablist">
          {tabs.map((tab, i) => (
            <button key={tab} role="tab" aria-selected={i === 0} className={`rounded-t-[4px] border border-b-0 border-[#f6f6f6] px-[6px] whitespace-nowrap shadow-[1px_-1px_1px_#aaa] ${i === 0 ? "h-5 bg-[#ececec]" : "h-[18px] bg-linear-to-b from-[#dedede] to-[#cdcdcd]"}`}>
              {tab}
            </button>
          ))}
        </div>
        <div className="flex gap-[3px] rounded-[4px] border border-[#f4f4f4] p-[6px] shadow-[0_1px_1px_#888]">
          <div className="flex w-[326px] flex-col gap-[3px]">
            <fieldset className={`h-[157px] ${group}`}>
              <h3 className={groupTitle}>Iniciar Programa</h3>
              <div className="mt-[7px] pl-[2px]">
                <Radio label="Inciar vazio" />
                <Radio label="Continuar última sessão" />
                <Radio label="Iniciar com partitura nova" />
                <div className="flex h-[23px] items-center">
                  <Radio label="Iniciar com partitura:" checked />
                  <PathInput label="Partitura inicial" value="/data/My_First_Score.mscz" className="mr-1 ml-[2px] min-w-0 flex-1" />
                  <BrowseButton label="Escolher partitura" />
                </div>
                <div className="grid grid-cols-[177px_1fr]">
                  <Check label="Mostrar tela de abertura" checked />
                  <Check label="Mostrar tela de início" checked />
                  <Check label="Exibir painel de reprodução" />
                  <Check label="Exibir navegador" />
                </div>
              </div>
            </fieldset>
            <fieldset className={`h-[207px] ${group}`}>
              <h3 className={groupTitle}>Pastas</h3>
              <div className="mt-[9px]">
                {folders.map(([name, path]) => (
                  <div key={name} className="flex h-[28px] items-center">
                    <label htmlFor={name} className="w-[70px] text-right">{name}:</label>
                    <PathInput id={name} value={path} className="mr-[5px] ml-2 min-w-0 flex-1" />
                    <BrowseButton label={`Escolher ${name}`} edit={name === "SoundFonts"} />
                  </div>
                ))}
              </div>
            </fieldset>
          </div>
          <div className="flex flex-1 flex-col gap-[3px]">
            <fieldset className={`h-[87px] ${group}`}>
              <h3 className={groupTitle}>Idioma</h3>
              <Select label="Idioma" value="Sistema" className={`mt-[7px] h-[18px] ${raised}`} />
              <button className={`mt-[18px] h-[18px] w-full rounded-[3px] leading-4 ${raised}`}>Atualizar traduções</button>
            </fieldset>
            <fieldset className={`h-[137px] ${group}`}>
              <h3 className={groupTitle}>Estilo</h3>
              <div className="mt-[28px] flex items-center gap-1">
                <Select label="Tema" value="Claro" className={`h-[19px] w-[105px] ${raised}`} />
                <Check label="Animações" checked />
              </div>
              <div className="mt-[23px] flex items-center gap-1">
                <label htmlFor="icon-width" className="w-[105px] whitespace-nowrap">Tamanho do ícone:</label>
                <Spin id="icon-width" value="28" className="flex-1" />
                <Spin label="Altura do ícone" value="24" className="flex-1" />
              </div>
            </fieldset>
            <fieldset className={`h-[67px] ${group}`}>
              <Check label="Salvar Automaticamente" checked bold />
              <div className="mt-[13px] flex items-center gap-[9px] pl-1">
                <label htmlFor="save-every">Salvar a cada:</label>
                <Spin id="save-every" value="2" className="w-8" />
                minutos
              </div>
            </fieldset>
            <fieldset className={`h-[67px] ${group}`}>
              <Check label="Controle Remoto OSC" bold />
              <div className="mt-[13px] flex items-center gap-[2px] text-[#8c8c8c]">
                <label htmlFor="osc-port">Número da porta:</label>
                <Spin id="osc-port" value="5282" className="w-[55px]" disabled />
              </div>
            </fieldset>
          </div>
        </div>
        <div className="mt-[5px] flex h-5 items-center gap-[3px]">
          <button className={`mr-auto h-[19px] rounded-[3px] px-[9px] leading-4 whitespace-nowrap ${raised}`}>Restaurar todas as configurações para o padrão</button>
          <button className={`h-[19px] w-[38px] rounded-[3px] leading-4 ${raised}`}><u>O</u>K</button>
          <button className={`h-[19px] w-[53px] rounded-[3px] leading-4 ${raised}`}>Apply</button>
          <button className={`h-[19px] w-[57px] rounded-[3px] leading-4 ${raised}`}><u>C</u>ancel</button>
        </div>
      </div>
    </div>
  );
}

function Taskbar() {
  return (
    <footer className="flex h-5 shrink-0 items-center bg-linear-to-b from-white to-[#dadada] text-[#111]">
      <svg viewBox="0 0 14 14" className="ml-[3px] h-[14px] w-[14px]">
        <path d="M.5 2H13.5V12H.5Z" fill="#2458b0" stroke="#456" />
        <path d="M1 3H13L1 9Z" fill="#5a8ad8" />
        <path d="M.5 12H13.5V13.5H.5Z" fill="#222" />
      </svg>
      <button className="ml-[18px] flex w-[166px] items-center gap-2">
        <ChromeIcon className="h-3 w-3" />
        musescore - Pesquisa...
      </button>
      <button className="flex w-[159px] items-center gap-2">
        <svg viewBox="0 0 12 12" className="h-3 w-3">
          <path d="M0 1H5L6 2.5H11V10H0Z" fill="#e8c766" />
          <path d="M2 5H12V11H2Z" fill="#a9d0ea" />
          <path d="M3 11L6 7L9 11Z" fill="#5aa35c" />
        </svg>
        KINGSTON
      </button>
      <button className="flex h-5 w-[166px] items-center gap-[6px] bg-[#d3d3d3] pl-[7px] whitespace-nowrap">
        <svg viewBox="0 0 14 14" className="h-[14px] w-[14px]">
          <rect width={14} height={14} fill="#efeadf" />
          <path d="M2 10V6Q3.5 4 4.5 6V10M4.5 6Q6 4 7 6V10M9 5V8Q9.5 10 12 9V5M9 4L12 3" fill="none" stroke="#7d9aba" />
        </svg>
        MuseScore: cavallo_v...
      </button>
    </footer>
  );
}

const docTab = "flex items-center gap-[12px] rounded-t-[4px] border border-b-0 border-[#f5f5f5] pr-[5px] pl-[6px] shadow-[1px_-1px_1px_#aaa]";

export default function App() {
  return (
    <div className="relative flex h-screen flex-col overflow-hidden bg-[#c9c9c9] font-['Open_Sans',sans-serif] text-[12px] leading-4 text-[#383838]">
      <TopPanel />
      <TitleBar />
      <div className="flex min-h-0 flex-1 flex-col bg-linear-to-b from-[#eeeeee] to-[#c9c9c9] to-[400px]">
        <Toolbars />
        <main className="flex min-h-0 flex-1 pl-[2px]">
          <Palettes />
          <div className="flex min-w-0 flex-1 flex-col pl-[5px]">
            <div className="flex h-[22px] shrink-0 items-end gap-[2px]">
              <button className={`h-[18px] bg-[#cfcfcf] ${docTab}`}>
                My_First_Score <span className="text-[14px] leading-3 font-bold">×</span>
              </button>
              <button className={`h-5 bg-[#e6e6e6] ${docTab}`}>
                cavallo_veloce* <span className="text-[14px] leading-3 font-bold">×</span>
              </button>
            </div>
            <div className="flex min-h-0 flex-1 flex-col overflow-hidden border-t border-[#c5c5c5] bg-[#dcdcdc] pt-[13px] pl-[9px]">
              <div className="w-[660px] bg-[#fafafa]">
                <Score />
              </div>
            </div>
          </div>
          <aside className="ml-1 w-[246px] shrink-0 rounded-[3px] border border-[#b5b5b5] bg-[#e2e2e2]">
            <div className="flex h-[17px] items-center justify-between pr-2 pl-1">
              <h2>Inspetor</h2>
              <DockButtons />
            </div>
            <p className="mt-[9px] pr-[70px] text-right font-bold text-[#222]">Nada selecionado</p>
          </aside>
        </main>
        <div className="h-5 shrink-0 pt-[2px] pr-px text-right">1:01:000</div>
      </div>
      <Taskbar />
      <Preferences />
    </div>
  );
}
